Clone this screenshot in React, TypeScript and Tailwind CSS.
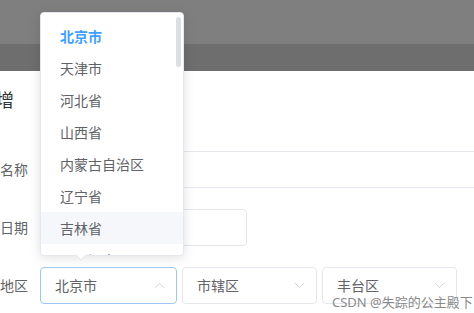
import { ChevronDown, ChevronUp } from "lucide-react"

const provinces = ["北京市", "天津市", "河北省", "山西省", "内蒙古自治区", "辽宁省", "吉林省", "黑龙江省"]

function Select({ value, open, width }: { value: string; open?: boolean; width: string }) {
  return (
    <div
      className={`${width} h-[37px] rounded-[4px] border bg-white flex items-center justify-between pl-[14px] pr-[8px] ${
        open ? "border-[#9cc8f6]" : "border-[#e4e7ed]"
      }`}
    >
      <span className="text-[14px] text-[#606266]">{value}</span>
      {open ? (
        <ChevronUp size={17} strokeWidth={1} className="text-[#c0c4cc]" />
      ) : (
        <ChevronDown size={17} strokeWidth={1} className="text-[#c0c4cc]" />
      )}
    </div>
  )
}

export default function App() {
  return (
    <div
      className="relative w-[474px] h-[313px] overflow-hidden bg-white"
      style={{ fontFamily: '"Noto Sans", "Noto Sans CJK SC", sans-serif' }}
    >
      {/* mask over the page */}
      <div className="h-[44px] bg-[#7f7f7f]" />
      <div className="h-[27px] bg-[#6e6e6e]" />

      {/* dialog body */}
      <div className="-ml-[72px]">
        {/* title */}
        <div className="pt-[17px] pl-[50px] h-[80px] text-[18px] leading-[24px] text-[#303133]">新增</div>

        {/* rows */}
        <div className="flex items-center h-[37px] mb-[21px]">
          <div className="w-[112px] shrink-0 pr-[12px] text-right text-[14px] text-[#606266] whitespace-nowrap">
            标题名称
          </div>
          <div className="w-[600px] shrink-0 h-[37px] rounded-[4px] border border-[#e4e7ed]" />
        </div>
        <div className="flex items-center h-[37px] mb-[21px]">
          <div className="w-[112px] shrink-0 pr-[12px] text-right text-[14px] text-[#606266]">日期</div>
          <div className="w-[207px] h-[37px] rounded-[4px] border border-[#e4e7ed]" />
        </div>
        <div className="flex items-center h-[37px]">
          <div className="w-[112px] shrink-0 pr-[12px] text-right text-[14px] text-[#606266]">地区</div>
          <div className="flex gap-[5px]">
            <Select value="北京市" open width="w-[137px]" />
            <Select value="市辖区" width="w-[135px]" />
            <Select value="丰台区" width="w-[135px]" />
          </div>
        </div>
      </div>

      {/* cascader dropdown */}
      <div className="absolute left-[40px] top-[12px] w-[144px] h-[244px] rounded-[4px] bg-white shadow-[0_2px_12px_rgba(0,0,0,0.12)] border border-[#e4e7ed]">
        <div className="h-full overflow-hidden rounded-[4px] pt-[7px]">
          {provinces.map((p, i) => (
            <div
              key={p}
              className={`h-[32px] flex items-center pl-[19px] text-[14px] ${
                i === 0 ? "text-[#409eff] font-bold" : "text-[#606266]"
              } ${i === 6 ? "bg-[#f5f7fa]" : ""}`}
            >
              {p}
            </div>
          ))}
        </div>
        {/* scrollbar */}
        <div className="absolute right-[2px] top-[4px] w-[5px] h-[50px] rounded-full bg-[#dcdee2]" />
        {/* arrow */}
        <div className="absolute left-[36px] -bottom-[4px] w-[8px] h-[8px] rotate-45 bg-white border-r border-b border-[#e4e7ed]" />
      </div>

      {/* watermark */}
      <div className="absolute left-[332px] top-[293px] text-[13px] leading-[18px] text-[#8a8a8a] whitespace-nowrap">
        CSDN @失踪的公主殿下
      </div>
    </div>
  )
}
